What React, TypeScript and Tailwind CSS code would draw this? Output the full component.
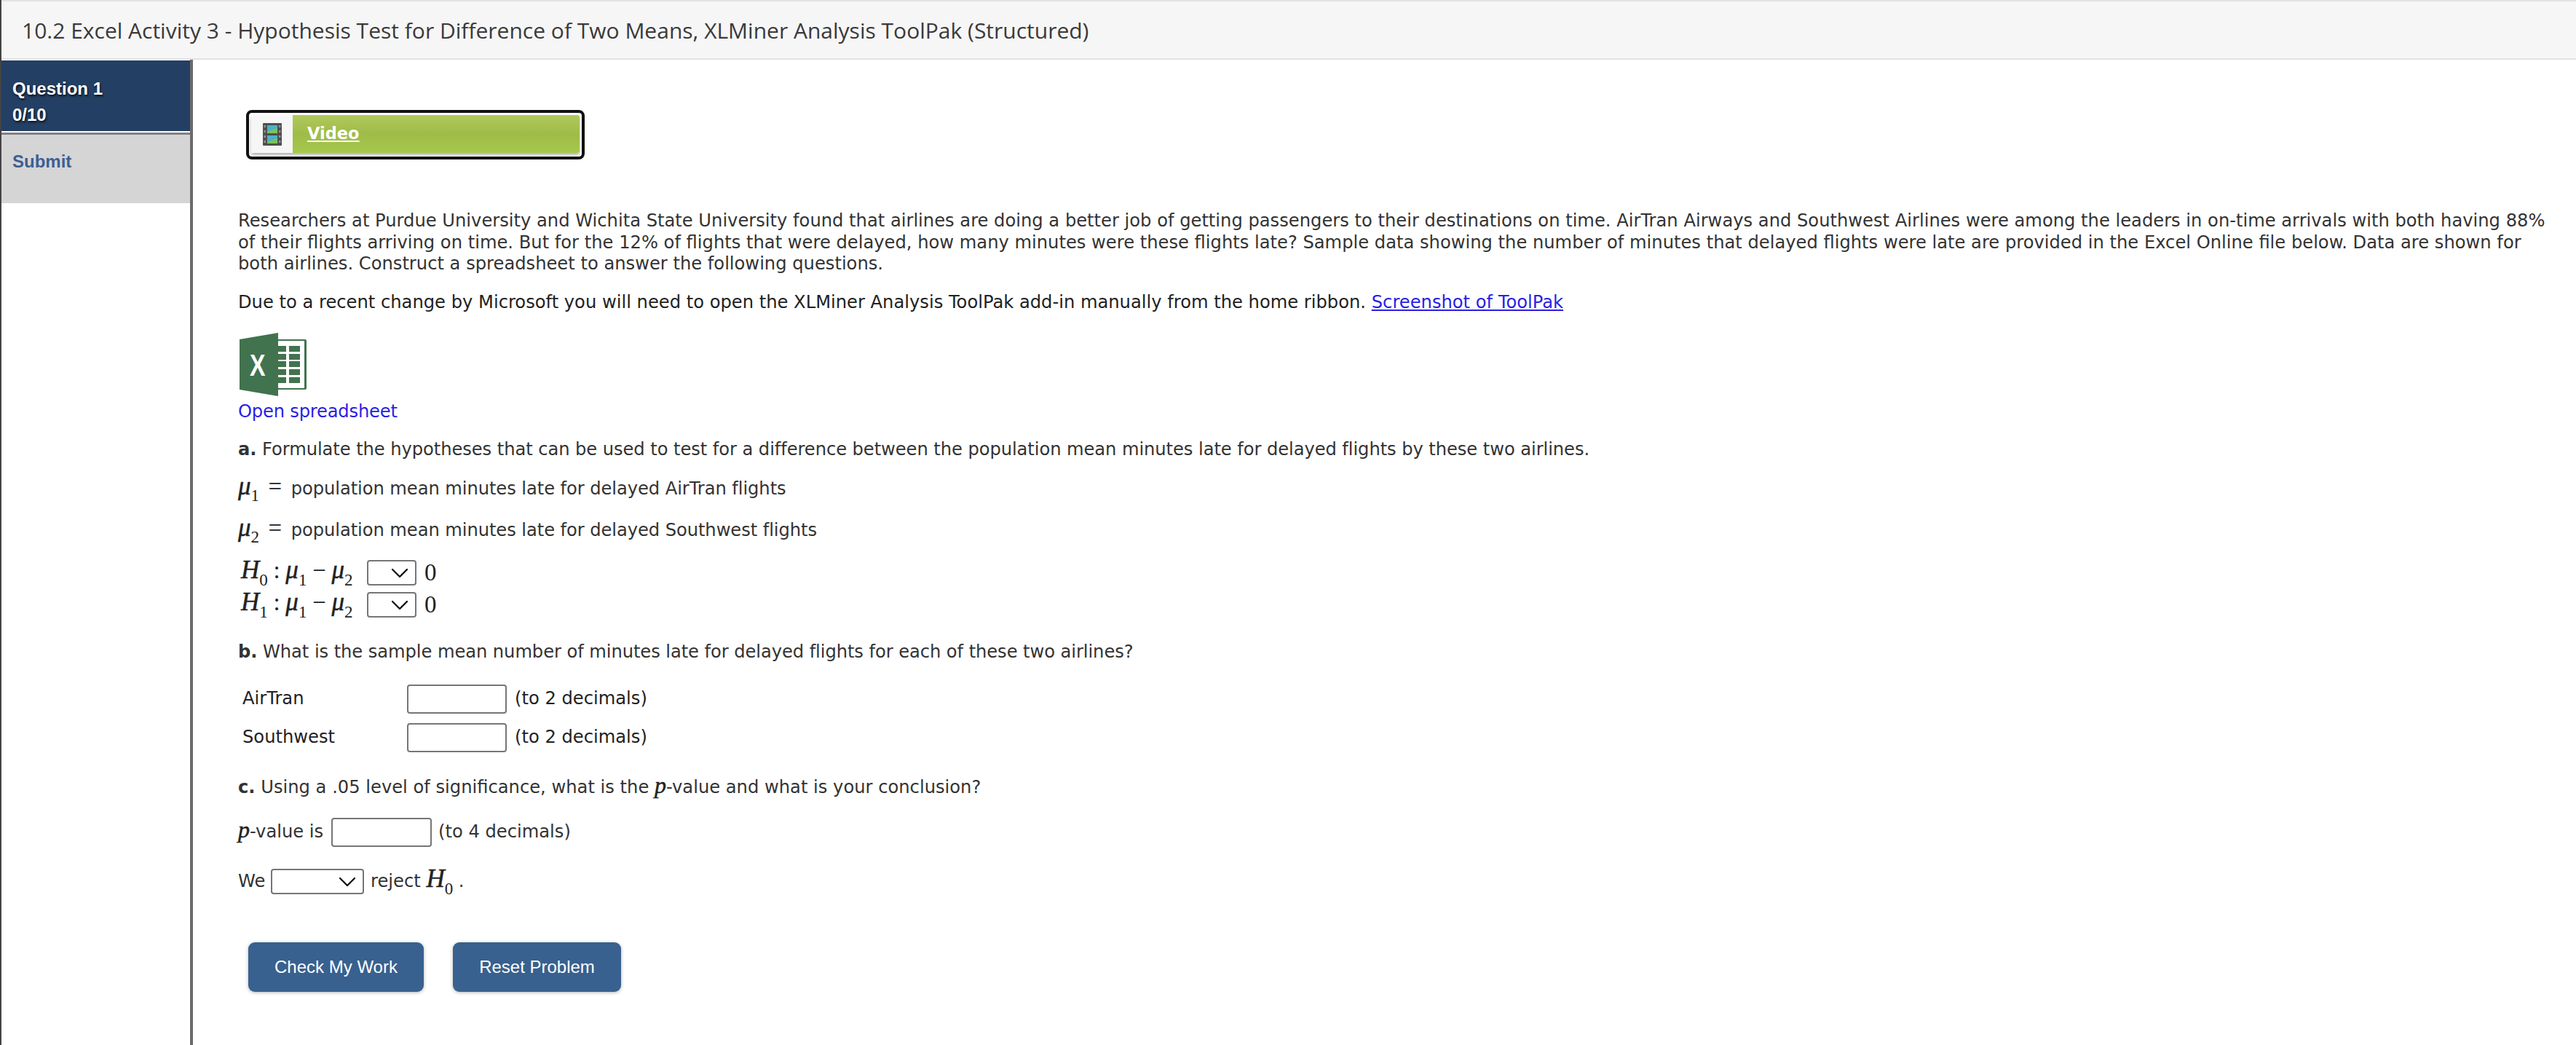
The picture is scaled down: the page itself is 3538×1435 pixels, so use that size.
import { ChevronDown } from "lucide-react";

const serif = "font-['Liberation_Serif',serif]";
const mathOp = "font-['Liberation_Serif',serif] text-[33px] leading-[0] text-[#222]";
const mathVar = "font-['Liberation_Serif',serif] text-[32px] leading-[0] text-[#222] [-webkit-text-stroke:0.5px_#222]";

function Mu({ n }: { n: string }) {
    return (
        <span className={`${serif} text-[#222] leading-[0]`}>
            <i className="text-[35px] leading-[0] [-webkit-text-stroke:0.5px_#222]">μ</i>
            <sub className="text-[23px] leading-[0] align-[-4px]">{n}</sub>
        </span>
    );
}

function Hyp({ n }: { n: string }) {
    return (
        <span className={`${serif} text-[#222] leading-[0]`}>
            <i className="text-[35px] leading-[0] [-webkit-text-stroke:0.5px_#222]">H</i>
            <sub className="text-[23px] leading-[0] align-[-4px]">{n}</sub>
        </span>
    );
}

function Dropdown({ width }: { width: string }) {
    return (
        <span className={`relative inline-block h-[35px] shrink-0 ${width}`}>
            <select className="w-full h-full appearance-none bg-white border-[2px] border-[#767676] rounded-[4px]" />
            <ChevronDown className="absolute right-[3px] top-[-2px] w-[40px] h-[40px] text-black pointer-events-none" strokeWidth={1.3} />
        </span>
    );
}

function Field({ width }: { width: string }) {
    return <input className={`h-[40px] ${width} bg-white border-[2px] border-[#767676] rounded-[4px]`} />;
}

function FilmIcon() {
    return (
        <svg width="26" height="31" viewBox="0 0 26 31">
            <rect x="0" y="0" width="26" height="31" rx="1" fill="#4f4f4f" />
            <rect x="6" y="3" width="14" height="11" fill="#7cc25a" />
            <path d="M6 3h14v4L6 12z" fill="#4fb0c8" />
            <rect x="6" y="17" width="14" height="11" fill="#7cc25a" />
            <path d="M6 17h14v4L6 26z" fill="#4fb0c8" />
            <g fill="#8f8f8f">
                <rect x="1.5" y="3" width="2.5" height="3" />
                <rect x="1.5" y="10" width="2.5" height="3" />
                <rect x="1.5" y="17" width="2.5" height="3" />
                <rect x="1.5" y="24" width="2.5" height="3" />
                <rect x="22" y="3" width="2.5" height="3" />
                <rect x="22" y="10" width="2.5" height="3" />
                <rect x="22" y="17" width="2.5" height="3" />
                <rect x="22" y="24" width="2.5" height="3" />
            </g>
        </svg>
    );
}

function ExcelIcon() {
    const rows = [18, 29, 39, 50, 61];
    return (
        <svg width="93" height="88" viewBox="0 0 93 88">
            <rect x="48" y="9" width="44" height="69" rx="2" fill="#41734e" />
            <rect x="50" y="11" width="39" height="65" fill="#fff" />
            {rows.map((y) => (
                <g key={y} fill="#41734e">
                    <rect x="52" y={y} width="12" height="8" />
                    <rect x="68" y={y} width="15" height="8" />
                </g>
            ))}
            <polygon points="0,9 53,0 53,87 0,78" fill="#41734e" />
            <text transform="translate(14 59) scale(0.75 1)" fill="#fff" fontFamily="Liberation Sans, sans-serif" fontWeight="700" fontSize="43">
                X
            </text>
        </svg>
    );
}

export default function App() {
    return (
        <div className="min-h-[1435px] bg-white text-[#333] font-['DejaVu_Sans',sans-serif] text-[24.2px] flex flex-col border-l-[2px] border-[#444]">
            <header className="h-[82px] shrink-0 bg-[#f6f6f6] border-t-[2px] border-b-[2px] border-[#e2e2e2] pl-[28px] flex items-center font-['Open_Sans',sans-serif] text-[30px] text-[#3a3a3a]">
                10.2 Excel Activity 3 - Hypothesis Test for Difference of Two Means, XLMiner Analysis ToolPak (Structured)
            </header>

            <div className="flex flex-1">
                <aside className="w-[263px] shrink-0 border-r-[4px] border-[#6b6b6b] font-['Liberation_Sans',sans-serif] font-bold text-[24px]">
                    <div className="h-[97px] mt-[1px] bg-[#233f63] text-white pl-[15px] pt-[21px] leading-[36px] [text-shadow:1px_2px_3px_rgba(0,0,0,0.8)]">
                        <div>Question 1</div>
                        <div>0/10</div>
                    </div>
                    <div className="h-[2px] bg-white" />
                    <div className="h-[97px] bg-[#d5d5d5] border-t-[3px] border-[#808080] text-[#3c5f94] pl-[15px] pt-[19px] leading-[36px]">
                        Submit
                    </div>
                </aside>

                <main className="flex-1 pl-[62px] pr-[38px]">
                    <div className="mt-[69px] ml-[11px] w-[465px] h-[68px] border-[4px] border-[#111] rounded-[8px] bg-white p-[3px]">
                        <div className="flex h-[52px] shadow-[0_3px_4px_rgba(0,0,0,0.3)] rounded-[3px]">
                            <div className="w-[57px] bg-[#f6f6f6] flex items-center justify-center shrink-0">
                                <FilmIcon />
                            </div>
                            <div className="flex-1 bg-gradient-to-b from-[#b0ca5c] via-[#9fbb48] to-[#a6c84c] rounded-r-[3px] pl-[20px] flex items-center">
                                <a className="text-white font-bold underline text-[22.5px]">Video</a>
                            </div>
                        </div>
                    </div>

                    <p className="mt-[70px] leading-[29.5px]">
                        Researchers at Purdue University and Wichita State University found that airlines are doing a better job of getting passengers to their destinations on time. AirTran Airways and Southwest Airlines were among the leaders in on-time arrivals with both having 88% of their flights arriving on time. But for the 12% of flights that were delayed, how many minutes were these flights late? Sample data showing the number of minutes that delayed flights were late are provided in the Excel Online file below. Data are shown for both airlines. Construct a spreadsheet to answer the following questions.
                    </p>

                    <p className="mt-[22px] leading-[30px] text-[#222]">
                        Due to a recent change by Microsoft you will need to open the XLMiner Analysis ToolPak add-in manually from the home ribbon.{" "}
                        <a className="text-[#2a1ee6] underline">Screenshot of ToolPak</a>
                    </p>

                    <div className="mt-[27px] ml-[2px]">
                        <ExcelIcon />
                    </div>
                    <a className="block mt-[5px] leading-[30px] text-[#2a1ee6] tracking-[-0.2px]">Open spreadsheet</a>

                    <p className="mt-[22px] leading-[30px] tracking-[-0.07px]">
                        <b>a.</b> Formulate the hypotheses that can be used to test for a difference between the population mean minutes late for delayed flights by these two airlines.
                    </p>

                    <p className="mt-[24px] leading-[30px] tracking-[-0.07px]">
                        <Mu n="1" /> <span className={`${mathOp} mx-[5px]`}>=</span> population mean minutes late for delayed AirTran flights
                    </p>
                    <p className="mt-[27px] leading-[30px] tracking-[-0.07px]">
                        <Mu n="2" /> <span className={`${mathOp} mx-[5px]`}>=</span> population mean minutes late for delayed Southwest flights
                    </p>

                    <div className="mt-[26px] ml-[4px] flex flex-col gap-[9px]">
                        <div className="flex items-center gap-[8px] h-[35px]">
                            <span className="w-[165px] whitespace-nowrap">
                                <Hyp n="0" /> <span className={mathOp}>:</span> <Mu n="1" /> <span className={mathOp}>−</span> <Mu n="2" />
                            </span>
                            <Dropdown width="w-[68px]" />
                            <span className={`${mathOp} ml-[3px]`}>0</span>
                        </div>
                        <div className="flex items-center gap-[8px] h-[35px]">
                            <span className="w-[165px] whitespace-nowrap">
                                <Hyp n="1" /> <span className={mathOp}>:</span> <Mu n="1" /> <span className={mathOp}>−</span> <Mu n="2" />
                            </span>
                            <Dropdown width="w-[68px]" />
                            <span className={`${mathOp} ml-[3px]`}>0</span>
                        </div>
                    </div>

                    <p className="mt-[32px] leading-[30px] tracking-[-0.07px]">
                        <b>b.</b> What is the sample mean number of minutes late for delayed flights for each of these two airlines?
                    </p>

                    <div className="mt-[30px] ml-[6px] grid grid-cols-[226px_137px_1fr] gap-y-[13px] items-center">
                        <span className="text-[#222]">AirTran</span>
                        <Field width="w-[137px]" />
                        <span className="pl-[11px] text-[#222]">(to 2 decimals)</span>
                        <span className="text-[#222]">Southwest</span>
                        <Field width="w-[137px]" />
                        <span className="pl-[11px] text-[#222]">(to 2 decimals)</span>
                    </div>

                    <p className="mt-[33px] leading-[30px]">
                        <b>c.</b> Using a .05 level of significance, what is the <i className={mathVar}>p</i>-value and what is your conclusion?
                    </p>

                    <div className="mt-[27px] flex items-center h-[40px] gap-[9px]">
                        <span className="w-[119px] whitespace-nowrap">
                            <i className={mathVar}>p</i>-value is
                        </span>
                        <Field width="w-[138px]" />
                        <span>(to 4 decimals)</span>
                    </div>

                    <div className="mt-[30px] flex items-center h-[35px] gap-[9px]">
                        <span className="w-[36px]">We</span>
                        <Dropdown width="w-[128px]" />
                        <span>
                            reject <Hyp n="0" /> .
                        </span>
                    </div>

                    <div className="mt-[66px] ml-[14px] flex gap-[40px] font-['Liberation_Sans',sans-serif] text-[24px] text-white">
                        <button className="w-[241px] h-[68px] bg-[#38618f] rounded-[9px] shadow-[0_1px_5px_rgba(0,0,0,0.3)]">Check My Work</button>
                        <button className="w-[231px] h-[68px] bg-[#38618f] rounded-[9px] shadow-[0_1px_5px_rgba(0,0,0,0.3)]">Reset Problem</button>
                    </div>
                </main>
            </div>
        </div>
    );
}
